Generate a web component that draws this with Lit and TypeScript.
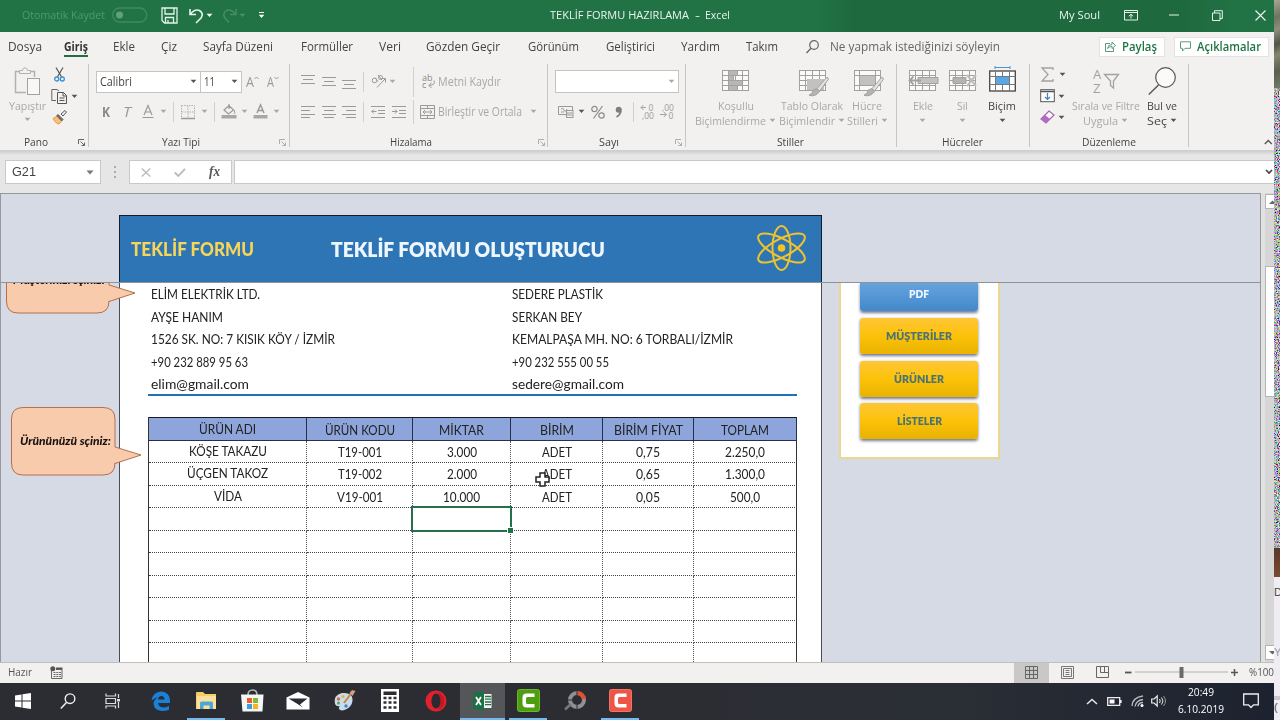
import { LitElement, html, svg, css, TemplateResult } from "lit";
import { customElement, property, query } from "lit/decorators.js";

/** One line of text condensed or stretched to a fixed advance width. */
@customElement("fit-text")
class FitText extends LitElement {
  @property({ type: Number }) w = 0;
  @query("span") span!: HTMLSpanElement;
  static styles = css`
    :host { display: inline-block; white-space: nowrap; vertical-align: top; text-align: left; flex: none; }
    span { display: inline-block; transform-origin: 0 50%; vertical-align: top; }
  `;
  firstUpdated() {
    const natural = this.span.getBoundingClientRect().width;
    this.style.width = `${this.w}px`;
    if (natural > 0) this.span.style.transform = `scaleX(${this.w / natural})`;
  }
  render() {
    return html`<span><slot></slot></span>`;
  }
}

type Part = any;
const t = (text: string, w: number) => html`<fit-text w=${w}>${text}</fit-text>`;
const ic = (w: number, h: number, body: Part, cls = "") =>
  html`<svg class="ic ${cls}" width=${w} height=${h} viewBox="0 0 ${w} ${h}">${body}</svg>`;

/** A grid row whose column edges are the given x offsets from its left edge. */
const track = (cls: string, from: number, items: [number, Part][]): TemplateResult => {
  const cols = [items[0][0] - from, ...items.map((it, i) => (i + 1 < items.length ? items[i + 1][0] - it[0] : 0))];
  const tpl = cols.map((c, i) => (i === cols.length - 1 ? "1fr" : `${c}px`)).join(" ");
  return html`<div class="track ${cls}" style="grid-template-columns:${tpl}"><div></div>${items.map((it) => html`<div class="slot">${it[1]}</div>`)}</div>`;
};

const caret = (cls = "lt") => ic(7, 5, svg`<path d="M.6.8h5.8L3.5 4z" fill="currentColor"/>`, cls);
const bar = (h: number) => ic(1, h, svg`<path d="M.5 0v${h}" stroke="#d2d0ce"/>`);
const lines = (rows: [number, number, number][]) =>
  svg`${rows.map(([x, y, w]) => svg`<path d="M${x} ${y}.5h${w}" stroke="#9c9a98"/>`)}`;
const launch = (dark = false) =>
  ic(9, 9, svg`<path d="M1.5 6V1.5H7M3.5 3.5l4 4M7.5 4.5v3h-3" fill="none" stroke="${dark ? "#666" : "#b0aeac"}"/>`);

const gridBase = svg`<rect x=".5" y=".5" width="26" height="20" fill="#fafafa" stroke="#a3a19f"/><path d="M.5 5.5h26M.5 10.5h26M.5 15.5h26M6.5.5v20M13.5.5v20M20.5.5v20" stroke="#a3a19f"/>`;
const brushTip = svg`<path d="M27.6 7.4 18 18.6l2.6 2.4 8.6-11.4q.8-2-1.6-2.2z" fill="#e4e2e0" stroke="#a3a19f"/><path d="M17.6 18.6q-4 .4-4.6 4.6l-3 2q6 2.2 10.600-3.600z" fill="#b5b3b1" stroke="#a3a19f"/>`;

const cellRows = [
  [["KÖŞE TAKAZU", 78], ["T19-001", 44], ["3.000", 30], ["ADET", 30], ["0,75", 24], ["2.250,0", 40]],
  [["ÜÇGEN TAKOZ", 81], ["T19-002", 44], ["2.000", 30], ["ADET", 30], ["0,65", 24], ["1.300,0", 40]],
  [["VİDA", 28], ["V19-001", 46], ["10.000", 37], ["ADET", 30], ["0,05", 24], ["500,0", 30]],
  [], [], [], [], [], [], [],
] as [string, number][][];
const headCells: [string, number][] = [
  ["ÜRÜN ADI", 57], ["ÜRÜN KODU", 70], ["MİKTAR", 45], ["BİRİM", 34], ["BİRİM FİYAT", 69], ["TOPLAM", 48],
];
const parties: [string, number, string, number][] = [
  ["ELİM ELEKTRİK LTD.", 109, "SEDERE PLASTİK", 91],
  ["AYŞE HANIM", 72, "SERKAN BEY", 70],
  ["1526 SK. NO: 7 KISIK KÖY / İZMİR", 184, "KEMALPAŞA MH. NO: 6 TORBALI/İZMİR", 221],
  ["+90 232 889 95 63", 97, "+90 232 555 00 55", 97],
  ["elim@gmail.com", 98, "sedere@gmail.com", 112],
];

@customElement("app-root")
class AppRoot extends LitElement {
  static styles = css`
    :host { display: grid; grid-template-columns: 1274px 6px; width: 1280px; height: 720px; overflow: hidden;
      font-family: "Open Sans", "Noto Sans", sans-serif; font-size: 12px; line-height: 16px; color: #444; }
    * { box-sizing: border-box; }
    .window { display: grid; grid-template-rows: 32px 32px 86px 43px 469px 21px 37px; overflow: hidden; min-width: 0; }
    .track { display: grid; align-items: center; min-width: 0; }
    .slot { display: flex; align-items: center; min-width: 0; white-space: nowrap; height: 100%; }
    .ic { display: block; flex: none; overflow: visible; fill: none; }
    .lt { color: #aaa8a6; } .dk { color: #555; } .wh { color: #fff; } .dim { color: #4b9069; }

    .title { background: linear-gradient(90deg, #217346 0 64%, #1f693f 67% 93%, #217346 97%); color: #e9f4ee; font-size: 11.5px; padding-bottom: 2px; }
    .auto { color: #4d9a70; font-size: 11px; }
    .tabs { background: #f2f1f0; font-size: 12.5px; padding-bottom: 2px; }
    .tab { display: flex; height: 100%; align-items: center; }
    .tab.on { font-weight: 700; color: #333; background: linear-gradient(#1e6e42, #1e6e42) 0 23px / 25px 2px no-repeat; }
    .ask { color: #666; }
    .pill { display: flex; align-items: center; gap: 6px; height: 20px; background: #fff; border: 1px solid #e4e3e2; color: #217346; font-weight: 600; padding-left: 5px; margin-bottom: 1px; }
    .share { width: 66px; } .notes { width: 95px; }

    .ribbon { display: grid; grid-template-columns: 89px 201px 258px 138px 211px 133px 159px 1fr; background: #f2f1f0; }
    .group { display: grid; grid-template-rows: 70px 16px; box-shadow: inset -1px 0 #c8c6c4; height: 83px; min-width: 0; }
    .last { box-shadow: none; }
    .gl { font-size: 11px; color: #444; font-weight: 500; }
    .two { display: grid; grid-template-rows: 35px 25px 10px; }
    .cols { display: grid; }
    .pano { grid-template-columns: 51px 1fr; }
    .stack3 { display: grid; grid-template-rows: 21px 22px 20px; }
    .center { display: flex; flex-direction: column; align-items: center; }
    .off { color: #aaa8a6; } .on2 { color: #444; }
    .big { font-size: 11.5px; line-height: 15px; }
    .paste { padding-top: 3px; padding-left: 3px; }
    .paste .cap { padding-top: 1px; height: 20px; }
    .capline { display: flex; align-items: center; gap: 3px; height: 15px; }
    .tools { display: grid; justify-items: center; }
    .styles { grid-template-columns: 99px 54px 56px; }
    .cells { grid-template-columns: 51px 29px 50px; }
    .tool { display: flex; flex-direction: column; align-items: center; padding-top: 3px; }
    .tool .pic { height: 31px; display: flex; align-items: flex-start; padding-top: 3px; }
    .tool .pic.tall { padding-top: 0; }
    .edit { grid-template-columns: 41px 69px 44px; }
    .combo { display: flex; align-items: center; justify-content: space-between; background: #fff; border: 1px solid #c6c4c2; height: 22px; padding: 0 3px 0 3px; }
    .fname { width: 105px; } .fsize { width: 41px; border-left: 0; } .numfmt { width: 124px; height: 23px; }
    .glyph { font-size: 14px; color: #9c9a98; } .gb { font-weight: 700; color: #8a8886; } .gi { font-style: italic; }

    .formula { background: linear-gradient(#cfcfcf 0 1px, #d4d4d4 2px, #e6e6e6 5px); display: grid; grid-template-columns: 96px 28px 103px 2px 1fr; align-items: start; padding: 10px 0 0 5px; }
    .fbox { height: 24px; background: #fff; border: 1px solid #c9c9c9; display: flex; align-items: center; justify-content: space-between; }
    .name { font: 13px/16px "Liberation Sans", sans-serif; padding: 0 6px; }
    .dots { display: flex; justify-content: center; padding-top: 6px; }
    .fxs { padding: 0 11px; }
    .fx { font: italic 700 14px/16px "Liberation Serif", serif; color: #555; }
    .input { justify-content: flex-end; border-right: 0; padding-right: 2px; }

    .work { display: grid; grid-template-columns: 1261px 4px 9px; background: #e1e1e2; overflow: hidden; }
    .sheet { display: grid; grid-template-rows: 90px 379px; border: 1px solid #97999f; border-bottom: 0; background: #d6dae5; overflow: hidden;
      font-family: Lato, sans-serif; font-size: 13.4px; color: #222; height: 469px; }
    .frozen { border-bottom: 1px solid #8f9299; padding: 21px 0 0 118px; height: 89px; }
    .banner { display: grid; grid-template-columns: 200px 1fr 65px; align-items: center; width: 703px; height: 67px; border: 1px solid #141c28; border-bottom: 0; background: #2e75b6; padding: 0 0 1px 11px; }
    .gold { color: #f7d558; font-size: 19px; line-height: 24px; font-weight: 900; } .big2 { color: #eef6fd; font-size: 20px; line-height: 24px; font-weight: 800; }
    .lower { position: relative; display: grid; grid-template-columns: 118px 703px 17px 161px; height: 380px; margin-top: -1px; overflow: hidden; align-items: start; }
    .form { grid-column: 2; background: #fff; border: solid #4b4d52; border-width: 0 1px; height: 380px; padding: 0 25px 0 28px; }
    .parties { display: grid; grid-template-columns: 361px 1fr; grid-auto-rows: 22.5px; align-items: center; height: 113px; border-bottom: 2px solid #1f71b8; padding-left: 3px; margin-bottom: 21px; padding-top: 0; width: 649px; }
    .table { border-left: 1px solid #333; width: 649px; }
    .tr { display: grid; grid-template-columns: 158px 106px 98px 92px 91px 103px; height: 22px; }
    .tr.odd { height: 23px; }
    .tr.head { height: 24px; }
    .td { display: flex; align-items: center; justify-content: center; border-right: 1px dotted #555; border-bottom: 1px dotted #444; }
    .td:first-child { padding-bottom: 2px; }
    .td:last-child { border-right: 1px solid #333; }
    .head .td { background: #8ea5dc; border-right: 1px solid #27304a; border-top: 1px solid #161b28; border-bottom: 1px solid #27304a; padding-top: 1px; }
    .side { grid-column: 4; height: 176px; border: 2px solid #ead88e; border-top: 0; background: #fff; display: grid; grid-template-rows: 28px 36px 36px 36px; row-gap: 7px; justify-content: center; align-content: start; padding-right: 1px; }
    .btn { width: 118px; display: flex; align-items: center; justify-content: center; border-radius: 3px; background: linear-gradient(#ffc637, #fcc208 50%, #e8b200); color: #4b7373; font-weight: 800; font-size: 11.5px; box-shadow: 0 1.500px 3px #4a5070c0; }
    .btn:last-child { margin: -1px 0 1px; }
    .pdf { border-radius: 0 0 3px 3px; background: linear-gradient(#67a3de, #4189cb); color: #eef6ff; padding-bottom: 7px; }
    .sel { position: absolute; left: 410px; top: 223px; width: 101px; height: 26px; border: 2px solid #23704a; }
    .knob { position: absolute; right: -3px; bottom: -3px; width: 6px; height: 6px; background: #217346; border: 1px solid #fff; border-width: 1px 0 0 1px; }
    .call { position: absolute; } .c1 { top: -38px; left: 5px; } .c2 { top: 124px; left: 10px; }
    .calltext { position: absolute; font: italic 900 12px/16px Lato, sans-serif; color: #1a1210; } .ct1 { left: 12px; top: -11px; } .ct2 { left: 19px; top: 150px; }
    .mouse { position: absolute; left: 534px; top: 189px; }
    .scroll { display: grid; grid-template-rows: 15px 57px 131px 1fr 15px 2px; padding-top: 1px; background: #d6d6d6; }
    .scroll > .sb { background: #fff; border: 1px solid #b4b4b4; border-right: 0; display: flex; align-items: center; padding-left: 2px; }

    .status { background: #f2f1f0; border-top: 1px solid #c0bfc0; font-size: 11px; color: #555; padding-bottom: 2px; box-shadow: inset 0 0 0 #fff; }
    .view { display: flex; align-items: center; justify-content: center; background: #c9c8c7; width: 35px; height: 20px; margin-bottom: -2px; padding-bottom: 2px; }
    .task { background: linear-gradient(90deg, #2c2d33 0 50%, #2a2e35 75%, #1d2230); }
    .task .slot { padding-bottom: 1px; }
    .task .slot:has(.app) { padding-bottom: 0; }
    .app { display: flex; align-items: center; justify-content: center; width: 46px; height: 37px; position: relative; padding-bottom: 2px; }
    .active { background: #55565a; }
    .run::after { content: ""; position: absolute; bottom: 0; left: 4px; right: 4px; height: 2px; background: #76b9ed; }
    .active.run::after { left: 0; right: 0; }
    .clock { display: flex; flex-direction: column; align-items: center; color: #fff; font-size: 11.5px; line-height: 17px; padding-bottom: 2px; }

    .edge { display: grid; grid-template-rows: 88px 460px 29px 143px; overflow: hidden; }
    .photo { background: linear-gradient(155deg, #a7a894, #6f7364 20%, #8b8f7c 34%, #4e5547 50%, #83866f 62%, #595e50 80%, #747a68); }
    .wood { background: linear-gradient(#58392b, #7a4a31); }
    .page { background: #efedf3; font: 11px/14px "Liberation Sans", sans-serif; color: #444; display: grid; grid-template-rows: 8px 60px 51px 4px 1fr; overflow: hidden; }
    .page .strip { background: #c9c7cd; } .page .pale { color: #9a98a8; }
  `;

  titleBar() {
    return track("title", 0, [
      [22, html`<span class="auto">${t("Otomatik Kaydet", 83)}</span>`],
      [112, ic(36, 16, svg`<rect x=".7" y="1" width="34" height="14" rx="7" stroke="#3f8a60" stroke-width="1.3"/><circle cx="7.500" cy="8" r="3.500" fill="#5fa07d"/>`)],
      [161, ic(17, 17, svg`<path d="M1 1h15v15H3.500L1 13.500zM4 1v6h9V1M4.500 16v-5.500h8V16M7 13v3" stroke="#e6f3ec" stroke-width="1.3"/>`)],
      [188, ic(18, 17, svg`<path d="M2 2v5.500h6M2.500 7Q7 1.500 11.500 3.500q4.500 3 1.500 7.500L8 16" stroke="#e6f3ec" stroke-width="1.6"/>`)],
      [206, caret("wh")],
      [222, ic(16, 17, svg`<path d="M14 2v5.500H8M13.500 7Q9 1.500 4.500 3.500q-4.500 3-1.500 7.500L7 15.500" stroke="#448d65" stroke-width="1.5"/>`)],
      [239, caret("dim")],
      [258, ic(7, 8, svg`<path d="M1 1.500h5" stroke="#fff"/><path d="M.8 3.800h5.500L3.500 7z" fill="#fff"/>`)],
      [550, t("TEKLİF FORMU HAZIRLAMA", 139)],
      [695, t("-", 5)],
      [705, t("Excel", 25)],
      [1059, t("My Soul", 41)],
      [1124, ic(14, 12, svg`<path d="M.5 1.500h13v9.500H.5zM.5 3.500h13M7 9.500V5.500M4.800 7.300 7 5.200l2.200 2.100" stroke="#e6f3ec"/>`)],
      [1169, ic(10, 2, svg`<path d="M0 1h10" stroke="#e6f3ec"/>`)],
      [1212, ic(11, 11, svg`<path d="M.5 3h7.500v7.500H.5zM2.500 3V.7h7.800v7.800H8" stroke="#e6f3ec"/>`)],
      [1255, ic(11, 11, svg`<path d="m.5.5 10 10m0-10-10 10" stroke="#f4faf6" stroke-width="1.100"/>`)],
    ]);
  }

  tabBar() {
    const tab = (s: string, w: number, on = false) => html`<span class="tab ${on ? "on" : ""}">${t(s, w)}</span>`;
    return track("tabs", 0, [
      [8, tab("Dosya", 34)], [64, tab("Giriş", 24, true)], [113, tab("Ekle", 22)], [161, tab("Çiz", 16)],
      [203, tab("Sayfa Düzeni", 70)], [301, tab("Formüller", 52)], [379, tab("Veri", 22)], [426, tab("Gözden Geçir", 74)],
      [528, tab("Görünüm", 51)], [606, tab("Geliştirici", 49)], [681, tab("Yardım", 39)], [746, tab("Takım", 32)],
      [806, ic(13, 14, svg`<circle cx="8" cy="5" r="4.300" stroke="#666" stroke-width="1.200"/><path d="M5 8.200.5 13" stroke="#666" stroke-width="1.300"/>`)],
      [830, html`<span class="ask">${t("Ne yapmak istediğinizi söyleyin", 170)}</span>`],
      [1099, html`<span class="pill share">${ic(11, 11, svg`<path d="M5 2.500H.5v8h8V7M2.500 7.500Q3 3.500 7 3.500V1l3.500 3.500L7 7.500V5.500Q4 5.500 2.500 7.500z" stroke="#5f9a7a"/>`)}${t("Paylaş", 35)}</span>`],
      [1174, html`<span class="pill notes">${ic(11, 11, svg`<path d="M.5.8h10v6.500H5L2.500 10V7.300h-2z" stroke="#5f9a7a"/>`)}${t("Açıklamalar", 64)}</span>`],
    ]);
  }

  tool(pic: Part, l1: Part, l2: Part, on = false, tall = false) {
    return html`<div class="tool big ${on ? "on2" : "off"}"><div class="pic ${tall ? "tall" : ""}">${pic}</div><div class="capline">${l1}</div><div class="capline">${l2}</div></div>`;
  }

  ribbon() {
    const align = (rows: [number, number, number][]) => ic(14, 13, lines(rows));
    return html`<div class="ribbon">
      <div class="group">
        <div class="cols pano">
          <div class="paste center big off">
            ${ic(27, 30, svg`<path d="M6 4.500H1.500v21H12M16 4.500h4.500V10" stroke="#b3b1af" stroke-width="1.500"/><path d="M5.500 6.500v-3h3Q9 .8 11 .8t2.500 2.700h3v3z" stroke="#b3b1af" fill="#f2f1f0"/><rect x="13.500" y="11.500" width="12" height="16" fill="#f7f7f7" stroke="#a3a19f"/>`)}
            <div class="cap">${t("Yapıştır", 37)}</div>${caret()}
          </div>
          <div class="stack3">
            ${track("", 51, [[54, ic(11, 15, svg`<path d="M2 .5 7.600 10M9 .5 3.400 10" stroke="#555" stroke-width="1.200"/><circle cx="2.700" cy="12" r="2" stroke="#3a8fd0" stroke-width="1.300"/><circle cx="8.300" cy="12" r="2" stroke="#3a8fd0" stroke-width="1.300"/>`)]])}
            ${track("", 51, [[51, ic(17, 15, svg`<path d="M5 11.500H.8v-11H6L8 2" stroke="#666"/><path d="M6.500 3.500h6l3 3v8h-9zM12 3.500v3.500h3.500M8.500 9h5M8.500 11.500h5" stroke="#555"/>`)], [71, caret("dk")]])}
            ${track("", 51, [[52, ic(15, 15, svg`<path d="m9 4 4-3.500 1.500 1.500L11 6z" stroke="#555"/><path d="m6 4.500 5 5-1.500 1.500-5-5z" fill="#777" stroke="#555"/><path d="M4.500 6.500 1 8.500Q3 12.500 6 14q2.500-.5 3.500-2.500z" fill="#f3c27c" stroke="#e59b45"/>`)]])}
          </div>
        </div>
        ${track("gl", 0, [[24, t("Pano", 24)], [77, launch(true)]])}
      </div>
      <div class="group">
        <div class="two">
          ${track("", 89, [[96, html`<span class="combo fname">${t("Calibri", 32)}${caret("dk")}</span>`], [201, html`<span class="combo fsize">${t("11", 11)}${caret("dk")}</span>`],
            [246, html`<span class="glyph">${t("A", 8)}</span>${ic(5, 12, svg`<path d="M.5 3 2.500 1l2 2" stroke="#9c9a98"/>`)}`], [267, html`<span class="glyph">${t("A", 7)}</span>${ic(5, 12, svg`<path d="m.5 1 2 2 2-2" stroke="#9c9a98"/>`)}`]])}
          ${track("", 89, [[102, html`<span class="glyph gb">${t("K", 8)}</span>`], [123, html`<span class="glyph gi">${t("T", 8)}</span>`],
            [142, ic(13, 15, svg`<path d="M2 11 6 1.500 10 11M3.500 8h5M.5 13.500h11" stroke="#9c9a98" stroke-width="1.200"/>`)], [160, caret()], [173, bar(20)],
            [181, ic(14, 14, svg`<path d="M.5.5h13v13M.5.5v13M7 1v12M1 7h12" stroke="#b5b3b1" stroke-dasharray="1.500 1"/><path d="M0 13.500h14" stroke="#9c9a98" stroke-width="1.500"/>`)], [201, caret()], [214, bar(20)],
            [221, ic(16, 15, svg`<path d="m3 6 5-4.500 4.500 4.500-5 4zM8 5V0" stroke="#9c9a98" stroke-width="1.200"/><path d="M13 6q2 3 0 4" stroke="#9c9a98"/><path d="M.5 11h15v3.500H.5z" fill="#a9a7a5"/>`)], [241, caret()],
            [253, ic(15, 15, svg`<path d="M4 9 7.500.8 11 9M5.200 6.500h4.600" stroke="#9c9a98" stroke-width="1.500"/><path d="M.5 11h14v3.500H.5z" fill="#a9a7a5"/>`)], [273, caret()]])}
        </div>
        ${track("gl", 89, [[162, t("Yazı Tipi", 38)], [278, launch()]])}
      </div>
      <div class="group">
        <div class="two">
          ${track("", 290, [[301, align([[0, 0, 14], [2, 4, 10], [0, 8, 14]])], [322, align([[0, 2, 14], [2, 6, 10], [0, 10, 14]])], [342, align([[0, 5, 14], [2, 9, 10], [0, 13, 14]])],
            [363, bar(20)], [371, ic(16, 15, svg`<path d="M6 13.500 14 5M14.500 8.500V4.500h-4" stroke="#9c9a98"/><circle cx="3.500" cy="6.500" r="2.300" stroke="#9c9a98"/><path d="m4 3.500 3 4M7 1l4 5" stroke="#9c9a98"/><circle cx="9.500" cy="3.500" r="2" stroke="#9c9a98"/>`)], [389, caret()],
            [413, bar(30)], [422, html`${ic(15, 15, svg`<text x="0" y="7" font-size="9" fill="#8c8a88">ab</text><text x="0" y="14" font-size="9" fill="#8c8a88">c</text><path d="M12 6.500q2 4.500-5 5M9.500 8.500 7 11.500 9.500 14" stroke="#9c9a98"/>`)}`], [438, html`<span class="off">${t("Metni Kaydır", 63)}</span>`]])}
          ${track("", 290, [[301, align([[0, 1, 14], [0, 5, 9], [0, 9, 14], [0, 12, 9]])], [322, align([[0, 1, 14], [2, 5, 10], [0, 9, 14], [2, 12, 10]])], [342, align([[0, 1, 14], [4, 5, 10], [0, 9, 14], [4, 12, 10]])],
            [363, bar(20)], [371, ic(14, 13, svg`${lines([[0, 1, 14], [7, 5, 7], [7, 8, 7], [0, 12, 14]])}<path d="M5.500 6.500H.8M2.800 4.500l-2 2 2 2" stroke="#9c9a98"/>`)], [392, ic(14, 13, svg`${lines([[0, 1, 14], [7, 5, 7], [7, 8, 7], [0, 12, 14]])}<path d="M0 6.500h5M3 4.500l2 2-2 2" stroke="#9c9a98"/>`)],
            [413, bar(24)], [420, ic(15, 14, svg`<path d="M.5.5h14v13H.5zM.5 3.500h14M.5 10.500h14M7.500.5v3M7.500 10.500v3M3 7h9M5 5 3 7l2 2M10 5l2 2-2 2" stroke="#9c9a98"/>`)], [438, html`<span class="off">${t("Birleştir ve Ortala", 84)}</span>`], [530, caret()]])}
        </div>
        ${track("gl", 290, [[390, t("Hizalama", 42)], [537, launch()]])}
      </div>
      <div class="group">
        <div class="two">
          ${track("", 548, [[555, html`<span class="combo numfmt"><span></span>${caret()}</span>`]])}
          ${track("", 548, [[558, ic(16, 13, svg`<path d="M.5 1.500h14v8H.5zM3 4q2-2 3 1t3-1M3 7h3" stroke="#9c9a98"/><rect x="8.500" y="5.500" width="6.500" height="7" fill="#f2f1f0" stroke="#9c9a98"/><path d="M8.500 8h6M8.500 10h6" stroke="#9c9a98"/>`)], [578, caret("dk")],
            [591, ic(14, 14, svg`<circle cx="3.500" cy="4" r="2.700" stroke="#8c8a88" stroke-width="1.200"/><circle cx="10.500" cy="10.500" r="2.700" stroke="#8c8a88" stroke-width="1.200"/><path d="M11.500 1 2.500 13.500" stroke="#8c8a88" stroke-width="1.200"/>`)],
            [615, ic(8, 12, svg`<circle cx="3.700" cy="3.700" r="3" fill="#807e7c"/><path d="M5.500 3.500q1 4.500-4 7.500" stroke="#807e7c" stroke-width="1.800"/>`)], [633, bar(20)],
            [640, ic(15, 15, svg`<path d="M6 3.500H1M3.500 1 1 3.500 3.500 6" stroke="#a3a19f"/><text x="8.500" y="7" font-size="8.500" fill="#9c9a98">0</text><text x="2" y="14.500" font-size="8.500" fill="#9c9a98">,00</text>`)],
            [660, ic(15, 15, svg`<text x="2" y="7" font-size="8.500" fill="#9c9a98">,00</text><path d="M0 10.500h6M3.800 8l2.500 2.500L3.800 13" stroke="#a3a19f"/><text x="8.500" y="14.500" font-size="8.500" fill="#9c9a98">0</text>`)]])}
        </div>
        ${track("gl", 548, [[599, t("Sayı", 20)], [674, launch()]])}
      </div>
      <div class="group">
        <div class="tools styles">
          ${this.tool(ic(27, 21, svg`${gridBase}<path d="M6.500.5h9v5h-9zM6.500 5.500h5v5h-5zM6.500 10.500h14v5h-14zM6.500 15.500h9v5h-9z" fill="#b9b7b5" stroke="#a3a19f"/>`), t("Koşullu", 36), html`${t("Biçimlendirme", 71)}${caret()}`)}
          ${this.tool(ic(27, 26, svg`${gridBase}<path d="M8 9h17v11H8z" fill="#c3c1bf"/>${brushTip}`), t("Tablo Olarak", 62), html`${t("Biçimlendir", 56)}${caret()}`)}
          ${this.tool(ic(27, 26, svg`<rect x=".5" y=".5" width="26" height="20" fill="#fafafa" stroke="#a3a19f"/><path d="M.5 5.500h26M.5 15.500h26M5.500.5v20M21.500.5v20" stroke="#a3a19f"/><path d="M6 6h15v9H6z" fill="#c3c1bf"/>${brushTip}`), t("Hücre", 30), html`${t("Stilleri", 31)}${caret()}`)}
        </div>
        ${track("gl", 686, [[777, t("Stiller", 27)]])}
      </div>
      <div class="group">
        <div class="tools cells">
          ${this.tool(ic(28, 21, svg`${gridBase}<path d="M9 7.500h20v6H9z" fill="#c3c1bf" stroke="#a3a19f"/><path d="M12 10.500H0M4.500 6.500.5 10.500l4 4" stroke="#a3a19f" stroke-width="1.800"/>`), t("Ekle", 20), caret())}
          ${this.tool(ic(27, 21, svg`${gridBase}<path d="M4 7.500h13v6H4z" fill="#b5b3b1" stroke="#a3a19f"/><path d="m18 5 9 11m0-11-9 11" stroke="#c0bebc" stroke-width="2"/>`), t("Sil", 11), caret())}
          ${this.tool(ic(27, 26, svg`<path d="M6 0.500h15M6-1v3M21-1v3" stroke="#4a94cf"/><rect x=".7" y="4" width="25.600" height="20" fill="#fff" stroke="#444" stroke-width="1.300"/><path d="M.5 9.500h26M.5 17.500h26M6.500 4v20M20.500 4v20M13.500 4v5M13.500 18v6" stroke="#777"/><path d="M7 10h13v7H7z" fill="#5aa7e6"/>`), t("Biçim", 28), caret("dk"), true, true)}
        </div>
        ${track("gl", 897, [[942, t("Hücreler", 41)]])}
      </div>
      <div class="group">
        <div class="cols edit">
          <div class="stack3">
            ${track("", 1030, [[1041, ic(13, 15, svg`<path d="M12 3V1H1l6 6.500L1 14h11v-2" stroke="#a3a19f" stroke-width="1.300"/>`)], [1059, caret("dk")]])}
            ${track("", 1030, [[1040, ic(15, 14, svg`<rect x=".7" y=".7" width="13.600" height="12" fill="#fff" stroke="#555"/><path d="M1 2.500h13" stroke="#555" stroke-width="1.500"/><path d="M7.500 4v6.500M5 8l2.500 2.500L10 8" stroke="#3a87b8" stroke-width="1.200"/>`)], [1058, caret("dk")]])}
            ${track("", 1030, [[1040, ic(15, 14, svg`<path d="m9 1 5 4-8 8-5-4z" fill="#fff" stroke="#a563b0" stroke-width="1.200"/><path d="m5 5 5 4-4 4-5-4z" fill="#b469c4"/>`)], [1058, caret("dk")]])}
          </div>
          ${this.tool(ic(28, 26, svg`<text x="1" y="12" font-size="13" fill="#a3a19f">A</text><text x="1" y="25.500" font-size="13" fill="#a3a19f">Z</text><path d="M12.500 7.500h14L21.500 14v7l-3-2.500v-4.500z" stroke="#a3a19f" stroke-width="1.300"/>`, ""), t("Sırala ve Filtre", 68), html`${t("Uygula", 35)}${caret()}`, false, true)}
          ${this.tool(ic(28, 30, svg`<circle cx="17.500" cy="10.500" r="9.800" fill="#fafafa" stroke="#5a5856" stroke-width="1.200"/><path d="M10.500 18 .8 27.500" stroke="#5a5856" stroke-width="1.500"/>`), t("Bul ve", 30), html`${t("Seç", 20)}${caret("dk")}`, true, true)}
        </div>
        ${track("gl", 1030, [[1082, t("Düzenleme", 54)]])}
      </div>
      <div class="group last"><div></div>${track("", 1189, [[1264, ic(9, 6, svg`<path d="m.8 5 3.500-3.500L7.800 5" stroke="#555" stroke-width="1.400"/>`)]])}</div>
    </div>`;
  }

  formula() {
    return html`<div class="formula">
      <div class="fbox name">${t("G21", 24)}${ic(8, 5, svg`<path d="M.5.5h7L4 4.500z" fill="#777"/>`)}</div>
      <div class="dots">${ic(3, 12, svg`<path d="M1 0v2M1 5v2M1 10v2" stroke="#999" stroke-width="1.500"/>`)}</div>
      <div class="fbox fxs">${ic(10, 9, svg`<path d="m.8.5 8.500 8m0-8-8.500 8" stroke="#b9b9b9" stroke-width="1.300"/>`)}${ic(12, 9, svg`<path d="m.8 4.500 3.500 3.500L11 .8" stroke="#b9b9b9" stroke-width="1.800"/>`)}<span class="fx">${t("fx", 11)}</span></div>
      <span></span>
      <div class="fbox input">${ic(6, 6, svg`<path d="m0 1 3 3 3-3" stroke="#444" stroke-width="1.600"/>`)}</div>
    </div>`;
  }

  sheet() {
    const bubble = (cls: string, w: number, h: number, tipX: number, tipY: number) => {
      const r = 12;
      return ic(tipX + 1, h + 1, svg`<path d="M${r} .5H${w - r}Q${w} .5 ${w} ${r}V${tipY - 8}L${tipX} ${tipY} ${w} ${tipY + 8.500}V${h - r}Q${w} ${h} ${w - r} ${h}H${r}Q.5 ${h} .5 ${h - r}V${r}Q.5 .5 ${r} .5z" fill="#f8cbad" stroke="#b5704c"/>`, `call ${cls}`);
    };
    return html`<div class="work">
      <div class="sheet">
        <div class="frozen"><div class="banner">
          <span class="gold">${t("TEKLİF FORMU", 123)}</span><span class="big2">${t("TEKLİF FORMU OLUŞTURUCU", 274)}</span>
          ${ic(52, 48, svg`<g transform="translate(25.500 23)" stroke="#eec32e" stroke-width="2"><ellipse rx="9" ry="22"/><ellipse rx="9" ry="26" transform="rotate(62)"/><ellipse rx="9" ry="26" transform="rotate(-62)"/><circle r="3.800" fill="#f4c41f" stroke="none"/></g>`)}
        </div></div>
        <div class="lower">
          <div class="form">
            <div class="parties">${parties.map((p) => html`${t(p[0], p[1])}${t(p[2], p[3])}`)}</div>
            <div class="table">
              <div class="tr head">${headCells.map((c) => html`<div class="td">${t(c[0], c[1])}</div>`)}</div>
              ${cellRows.map((r, i) => html`<div class="tr ${i % 2 ? "odd" : ""}">${headCells.map((_, c) => html`<div class="td">${r[c] ? t(r[c][0], r[c][1]) : ""}</div>`)}</div>`)}
            </div>
          </div>
          <div class="side">
            <div class="btn pdf">${t("PDF", 20)}</div><div class="btn">${t("MÜŞTERİLER", 66)}</div><div class="btn">${t("ÜRÜNLER", 50)}</div><div class="btn">${t("LİSTELER", 45)}</div>
          </div>
          ${bubble("c1", 103, 68, 129, 48)}${bubble("c2", 104, 68, 130, 48)}
          <span class="calltext ct1">${t("Müşterinizi sçiniz:", 92)}</span>
          <span class="calltext ct2">${t("Ürününüzü sçiniz:", 91)}</span>
          <div class="sel"><div class="knob"></div></div>
          ${ic(15, 16, svg`<path d="M5 1h5v4h4v5h-4v4H5v-4H1V5h4z" fill="#fff" stroke="#222" stroke-width="1.500"/>`, "mouse")}
        </div>
      </div>
      <span></span>
      <div class="scroll"><div class="sb">${ic(8, 4, svg`<path d="M1 4 4.500.5 8 4z" fill="#666"/>`)}</div><span></span><div class="sb"></div><span></span><div class="sb">${ic(8, 4, svg`<path d="M1 0h7L4.500 3.500z" fill="#666"/>`)}</div></div>
    </div>`;
  }

  status() {
    return track("status", 0, [
      [8, t("Hazır", 24)],
      [50, ic(13, 13, svg`<path d="M1.500 5v7.500h10.500v-9H6" stroke="#666"/><circle cx="2.800" cy="2.800" r="2.500" fill="#555"/><path d="M6 2.500h6.500" stroke="#555" stroke-width="2"/><path d="M3.500 6.500h7.500M3.500 8.500h7.500M3.500 10.500h7.500" stroke="#666" stroke-dasharray="2 .8"/>`)],
      [1014, html`<span class="view">${ic(13, 13, svg`<path d="M.5.5h12v12H.5zM.5 4.500h12M.5 8.500h12M4.500.5v12M8.500.5v12" stroke="#666"/>`)}</span>`],
      [1061, ic(13, 13, svg`<path d="M.5.5h12v12H.5zM2.500 2.500h8v8h-8zM4.500 4.500h4M4.500 6.500h4M4.500 8.500h4" stroke="#777"/>`)],
      [1096, ic(13, 13, svg`<path d="M.5.5h12v11H.5zM4.500.5v6h8M8.500.5v6" stroke="#666"/>`)],
      [1125, ic(7, 3, svg`<path d="M0 1.500h6.500" stroke="#555" stroke-width="1.800"/>`)],
      [1135, ic(94, 12, svg`<path d="M0 6h93" stroke="#b0b0b0"/><path d="M44.500 1h4v11h-4z" fill="#6a6a6a"/>`)],
      [1231, ic(7, 7, svg`<path d="M0 3.500h7M3.500 0v7" stroke="#555" stroke-width="1.500"/>`)],
      [1249, t("%100", 25)],
    ]);
  }

  taskbar() {
    const app = (x: number, pic: Part, cls = ""): [number, Part] => [x, html`<span class="app ${cls}">${pic}</span>`];
    const camt = (a: string, b: string) => ic(23, 23, svg`<rect x=".5" y=".5" width="22" height="22" rx="2" fill="${a}" stroke="${b}"/><path d="M17.500 4.500h-8Q5.500 4.500 5.500 8.500v6q0 4 4 4h8v-3.500h-7q-1.500 0-1.500-1.500V9.500Q9 8 10.500 8h7z" fill="#fff"/>`);
    return track("task", 0, [
      app(0, ic(16, 16, svg`<path d="m0 2.500 6.500-1v6H0zM7.500 1.300 16 0v7.500H7.500zM0 8.500h6.500v6L0 13.500zM7.500 8.500H16V16l-8.500-1.300z" fill="#fff"/>`)),
      app(45, ic(16, 16, svg`<circle cx="10" cy="5.700" r="4.800" stroke="#f0f0f0" stroke-width="1.400"/><path d="M6.700 9.200.8 15.500" stroke="#f0f0f0" stroke-width="1.500"/>`)),
      app(90, ic(16, 16, svg`<path d="M1 .5V3h9.500V.5M1 15.500V13h9.500v2.500M1 5.500h9.500v5H1zM13.500 1v4M13.500 9v6" stroke="#ddd" stroke-width="1.200"/><path d="M12 6h3v2.500h-3z" fill="#ddd"/>`)),
      app(138, ic(20, 20, svg`<path d="M.5 9.500Q2 1 10 .5q9 .5 9 9.500v2H7q.5 4 5 4.500 3 0 6-1.500v3.700Q15 20 11 20q-8-.5-8.500-7.500Q3 8 7.500 6 4 6.500.5 9.500zM7 8.500h6.500Q13.500 5 10.500 5 7.500 5 7 8.500z" fill="#1a80d8"/>`)),
      app(183, ic(21, 19, svg`<path d="M0 2Q0 1 1 1h6l2 2h11v15H0z" fill="#f4ce6b"/><path d="M1 5h19v13H1z" fill="#fbe19b"/><path d="M4 18v-6q0-1.500 1.500-1.500h10q1.500 0 1.500 1.500v6h-3.500v-3.500h-6V18z" fill="#4da7d8"/>`), "run"),
      app(229, ic(23, 23, svg`<path d="M7 6Q7 1 11.500 1T16 6" stroke="#b0b3b8" stroke-width="1.600"/><path d="M0 5.500h22.500l-1 17h-20z" fill="#f5f5f5"/><path d="M6 9h5v5H6z" fill="#f05a2b"/><path d="M12 9h5v5h-5z" fill="#84bb2c"/><path d="M6 15h5v5H6z" fill="#3a9ee0"/><path d="M12 15h5v5h-5z" fill="#f6b51e"/>`)),
      app(275, ic(24, 18, svg`<path d="M.5 5.500 12 0l11.500 5.500v12H.5z" fill="#fff"/><path d="M2.500 6.500h19L14 12.500l3 3L10 11z" fill="#2b2d33"/>`)),
      app(321, ic(23, 22, svg`<path d="M2 14Q0 5 9 3q10-1 10.500 6 .5 5-4 9-6 4-9 1.500-1.500-1.500.5-3.500-3.500 1-5-2z" fill="#c8dcea"/><path d="m11 13 7-9.500" stroke="#c08a4a" stroke-width="2"/><path d="m16.500 3 2.500-3 3.500 1-3 5z" fill="#d99c78"/><circle cx="5.500" cy="9" r="1.700" fill="#e0674a"/><circle cx="10" cy="6.500" r="1.600" fill="#e8b52e"/><circle cx="13" cy="16" r="1.700" fill="#3f88c8"/><circle cx="5.500" cy="13" r="1.500" fill="#50a85c"/>`)),
      app(367, ic(18, 23, svg`<path d="M0 0h18v23H0z" fill="#fff"/><path d="M2.500 2.500h13V6h-13z" fill="#2c2d33"/><path d="M2.500 9h13M2.500 13.500h13M2.500 18.500h13" stroke="#2c2d33" stroke-width="2.500" stroke-dasharray="3 2"/>`)),
      app(413, ic(22, 22, svg`<ellipse cx="11" cy="11" rx="10.500" ry="10.500" fill="#e0222f"/><ellipse cx="11" cy="11" rx="4.600" ry="7.500" fill="#2a2b31"/><path d="M13 2Q21 6 19 14q-1 4-6 6 4-9 0-18z" fill="#a8131f" opacity=".55"/>`)),
      app(460, ic(19, 20, svg`<path d="M10 3h8.500v14H10z" fill="#f4f4f4"/><path d="M12 5.500h6M12 8.200h6M12 11h6M12 13.700h6" stroke="#217346" stroke-width="1.300"/><path d="m0 2 11-2v20L0 18z" fill="#1d7044"/><path d="m3 6 5 8M8 6l-5 8" stroke="#fff" stroke-width="1.700"/>`), "active run"),
      app(505, camt("#4f9e0f", "#6fb52a"), "run"),
      app(551, ic(23, 21, svg`<circle cx="14" cy="10" r="7" stroke="#8e9094" stroke-width="4"/><path d="M14 3q6 .5 7 6" stroke="#e2502e" stroke-width="4"/><path d="M14 1v4M5 10h4M14 15v4" stroke="#2b2c32"/><path d="m8 14-6 5.500" stroke="#77797d" stroke-width="2.500"/>`)),
      app(597, camt("#ee5546", "#f37462"), "run"),
      [1086, ic(12, 7, svg`<path d="m1 6 5-4.500L11 6" stroke="#e8e8e8" stroke-width="1.500"/>`)],
      [1107, ic(15, 9, svg`<path d="M.7.700h12v7.600H.7zM14 3v3" stroke="#eee" stroke-width="1.300"/><path d="M2.500 2.500h5v4h-5z" fill="#fff"/>`)],
      [1131, ic(13, 12, svg`<path d="M1 11Q1.500 2.500 12 1M4 11.500Q5 5.500 12 4.500M7 11.500q.5-4 5-4" stroke="#b9bac0" stroke-width="1.300"/><circle cx="11" cy="10.500" r="1.500" fill="#fff"/>`)],
      [1151, ic(16, 12, svg`<path d="M.7 4h2.500l3-3v10l-3-3H.7z" stroke="#eee" stroke-width="1.200"/><path d="M8.500 4q1.500 2 0 4M10.500 2.500q3 3.500 0 7" stroke="#eee"/><path d="M12.500 1q4 5 0 10" stroke="#999"/>`)],
      [1178, html`<div class="clock">${t("20:49", 26)}${t("6.10.2019", 46)}</div>`],
      [1243, ic(16, 16, svg`<path d="M.7 1h14.600v10.800h-4.800L8 14.500l-2.500-2.700H.7z" stroke="#f0f0f0" stroke-width="1.300"/>`)],
    ]);
  }

  render() {
    return html`<div class="window">${this.titleBar()}${this.tabBar()}${this.ribbon()}${this.formula()}${this.sheet()}${this.status()}${this.taskbar()}</div>
      <div class="edge"><div class="photo"></div>
        ${ic(6, 460, svg`<filter id="grain" x="0" y="0" width="100%" height="100%"><feTurbulence type="fractalNoise" baseFrequency=".93" numOctaves="2" seed="7"/><feColorMatrix values="2.600 0 0 0 -.85 0 2.600 0 0 -.85 0 0 2.600 0 -.8 0 0 0 0 1"/></filter><rect width="6" height="460" filter="url(#grain)"/>`)}
        <div class="wood"></div>
        <div class="page"><span></span><span>D</span><span class="pale">Y</span><span class="strip"></span><span>(</span></div>
      </div>`;
  }
}
